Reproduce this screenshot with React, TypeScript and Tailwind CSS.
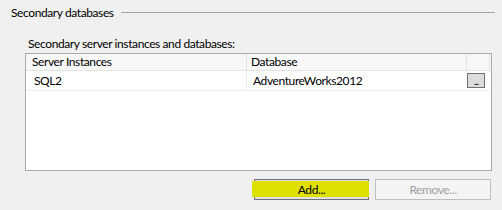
export default function App() {
  return (
    <div className="relative w-[502px] h-[210px] overflow-hidden bg-[#f0f0f0] text-[12px] tracking-[-0.4px] text-black font-['Lato',sans-serif]">
      {/* group header */}
      <div className="flex items-center pl-[11px] pr-[7px] pt-[4px] h-[20px]">
        <span className="leading-[15px] whitespace-nowrap">Secondary databases</span>
        <div className="flex-1 ml-[7px] h-px bg-[#a0a0a0]" />
      </div>

      <div className="pl-[25px] pr-[10px] pt-[16px]">
        <div className="pl-[3px] leading-[15px] h-[17px] whitespace-nowrap">
          Secondary server instances and databases:
        </div>

        {/* grid */}
        <div className="h-[118px] border border-[#a9a9a9] bg-white">
          <div className="grid grid-cols-[221px_220px_23px] h-[17px] bg-[#f7f7f7]">
            <div className="border-r border-b border-[#e3e3e3] pl-[6px] leading-[16px]">Server Instances</div>
            <div className="border-r border-b border-[#e3e3e3] pl-[4px] leading-[16px]">Database</div>
            <div className="border-r border-b border-[#e3e3e3]" />
          </div>
          <div className="grid grid-cols-[221px_220px_23px] h-[20px]">
            <div className="border-r border-b border-[#ececec] pl-[8px] leading-[19px]">SQL2</div>
            <div className="border-b border-[#ececec] pl-[6px] leading-[19px]">AdventureWorks2012</div>
            <div className="border-b border-[#ececec] flex items-center">
              <div className="w-[18px] h-[15px] border border-[#707070] bg-[#dcdcdc] flex items-end justify-center text-[10px] leading-[11px] tracking-[-1px]">
                ...
              </div>
            </div>
          </div>
        </div>

        {/* buttons */}
        <div className="flex justify-end gap-[6px] pt-[8px] pr-[1px]">
          <div className="relative w-[115px] h-[21px] border border-[#707070] bg-[#e1e1e1] flex items-center justify-center">
            <div className="absolute left-[-3px] top-[1px] w-[117px] h-[16px] bg-[#dfdf00]" />
            <span className="relative leading-[15px]">Add...</span>
          </div>
          <div className="w-[116px] h-[21px] border border-[#bfbfbf] bg-[#f4f4f4] flex items-center justify-center text-[#a0a0a0]">
            <span className="leading-[15px]">Remove...</span>
          </div>
        </div>
      </div>

      <div className="pl-[11px] pt-[7px] leading-[15px] whitespace-nowrap">Name</div>
    </div>
  );
}
